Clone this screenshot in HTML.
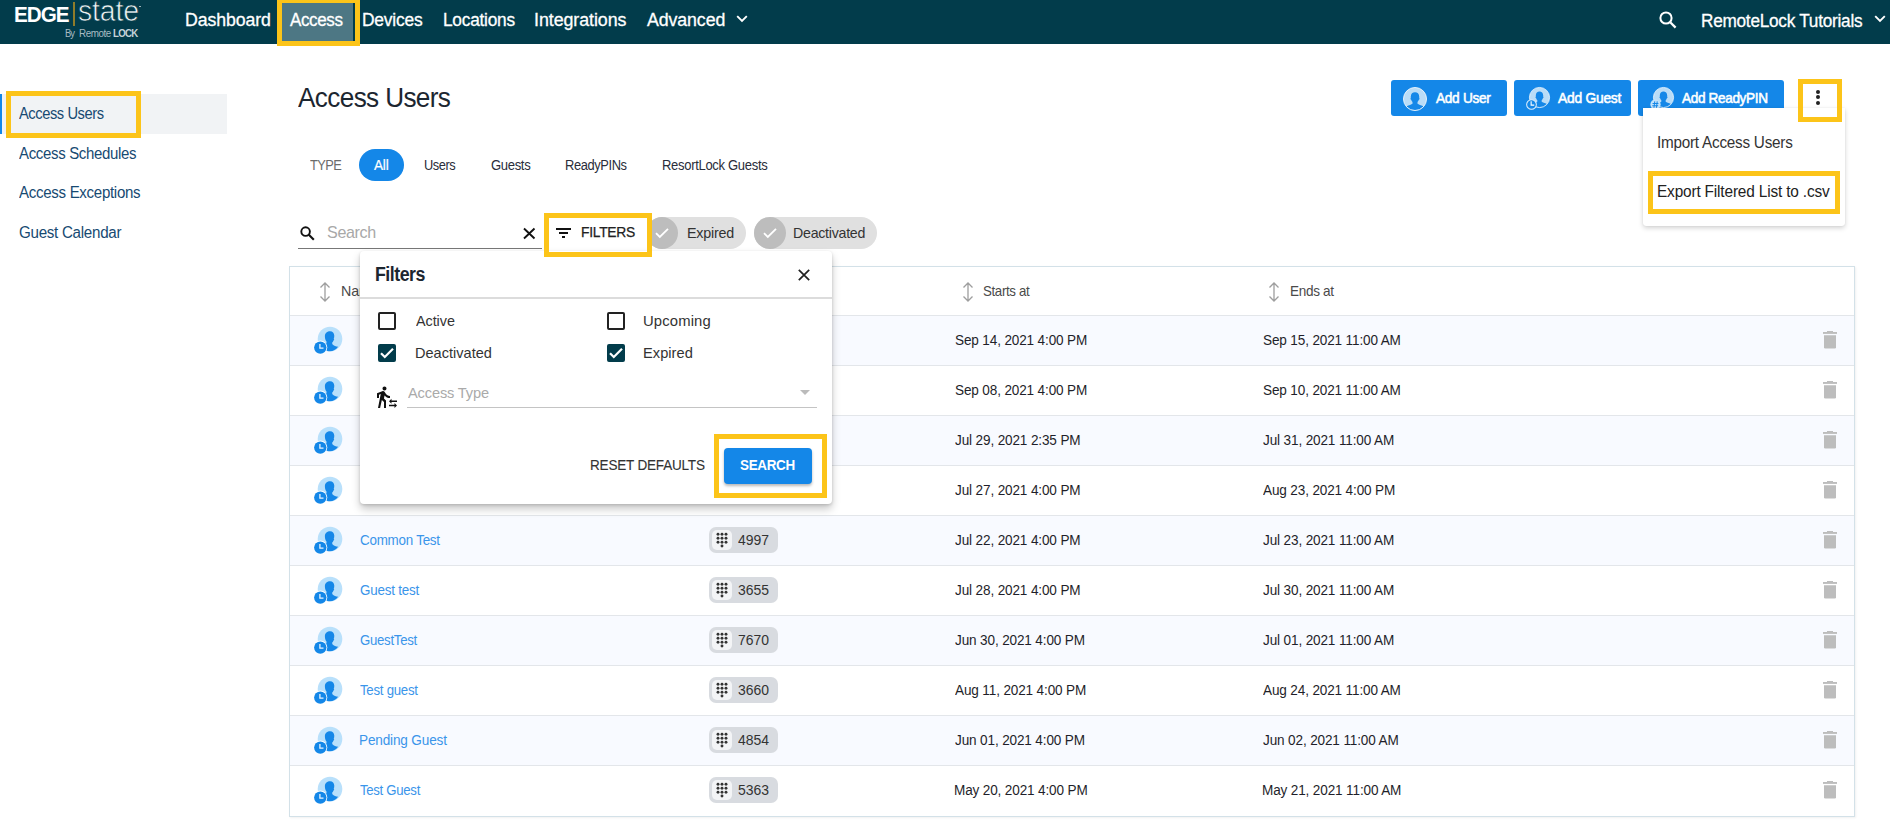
<!DOCTYPE html>
<html><head><meta charset="utf-8">
<style>
*{box-sizing:border-box;margin:0;padding:0}
html,body{width:1890px;height:829px;overflow:hidden;background:#fff;font-family:"Liberation Sans",sans-serif;position:relative}
.a{position:absolute;white-space:nowrap}
svg{position:absolute;overflow:visible}
.yb{position:absolute;border:5px solid #fcc419}
.row{position:absolute;left:289px;width:1566px;height:50px;border-top:1px solid #e3e6ea}
.row.o{background:#f8faff}
.cb{position:absolute;width:18px;height:18px;border:2px solid #222;border-radius:2px}
.cb.on{background:#023c4b;border-color:#023c4b}
</style></head><body>

<svg width="0" height="0" style="position:absolute">
<defs>
<g id="avg">
 <circle cx="14" cy="12" r="12.3" fill="#b9e0fb"/>
 <path d="M14 4.2c2.6 0 4.3 2 4.3 4.6 0 1.2-.2 2.2-.6 3.2l.6.5-.6.8c-.4 1-1 1.9-1.6 2.5l.3 1.4c1.4 1.3 3.6 2.2 5.7 2.6C20 22.6 17.2 24.3 14 24.3c-1.8 0-3.4-.5-4.8-1.4l1.4-8.2c-.8-.8-1.3-2-1.5-3.2-.2-.9-.2-1.8-.2-2.7C8.9 6.2 11.4 4.2 14 4.2z" fill="#1487e8"/>
 <circle cx="4.3" cy="20.6" r="7" fill="#fff"/>
 <circle cx="4.3" cy="20.6" r="6.2" fill="#1487e8"/>
 <path d="M3.9 17.1v4.1h3.6" stroke="#e8f3fd" stroke-width="1.3" fill="none"/>
</g>
<g id="dial" fill="#333">
 <circle cx="6" cy="4.3" r="1.45"/><circle cx="10" cy="4.3" r="1.45"/><circle cx="14" cy="4.3" r="1.45"/>
 <circle cx="6" cy="8.3" r="1.45"/><circle cx="10" cy="8.3" r="1.45"/><circle cx="14" cy="8.3" r="1.45"/>
 <circle cx="6" cy="12.3" r="1.45"/><circle cx="10" cy="12.3" r="1.45"/><circle cx="14" cy="12.3" r="1.45"/>
 <circle cx="10" cy="16" r="1.45"/>
</g>
<g id="trash" fill="#bdbdbd">
 <rect x="0" y="3" width="14" height="1.9"/><rect x="4" y="2" width="6" height="1.2"/>
 <path d="M1 6.2h12v12.1a1.3 1.3 0 0 1-1.300 1.300H2.300a1.300 1.300 0 0 1-1.300-1.300z"/>
</g>
<g id="sort" fill="none" stroke="#9e9e9e" stroke-width="1.3">
 <path d="M7 1v18M2.5 5.5L7 1l4.5 4.5M2.5 14.5L7 19l4.5-4.5"/>
</g>
<clipPath id="bclip"><circle cx="12" cy="12" r="11.6"/></clipPath>
<g id="bav">
 <circle cx="12" cy="12" r="11.5" fill="#b9dcf7"/>
 <path clip-path="url(#bclip)" d="M12 5.2C14.4 5.2 16.2 6.8 16.2 9.4V11.2C16.6 11.3 16.7 11.8 16.5 12.2L16 12.6C15.7 13.6 15.2 14.4 14.5 15V16.8C15.5 17.7 18.1 18.2 20.2 19.2V26H3.8V19.2C5.9 18.2 8.5 17.7 9.5 16.8V15C8.8 14.4 8.3 13.6 8 12.6L7.5 12.2C7.3 11.8 7.4 11.3 7.8 11.2V9.4C7.8 6.8 9.6 5.2 12 5.2Z" fill="#1487e8"/>
 <circle cx="12" cy="12" r="11.5" fill="none" stroke="#e3f1fc" stroke-width="1"/>
</g>
</defs></svg>
<div class="a" style="left:0;top:0;width:1890px;height:44px;background:#023c4b"></div>
<div class="a" style="left:14.48px;top:1px;font-size:22.5px;line-height:27px;color:#fff;font-weight:bold;letter-spacing:-1.088px;transform:scaleX(0.9177);transform-origin:0 0;">EDGE</div>
<div class="a" style="left:73px;top:2px;width:2.4px;height:23.5px;background:#8f7c2a"></div>
<div class="a" style="left:77.90px;top:-6px;font-size:29px;line-height:35px;color:#eef3f4;letter-spacing:-0.174px;transform:scaleX(0.9829);transform-origin:0 0;-webkit-text-stroke:0.7px #eef3f4;-webkit-text-stroke-color:#023c4b;">state</div>
<div class="a" style="left:138.5px;top:5.5px;width:2px;height:1.2px;background:#9fb3ba"></div>
<div class="a" style="left:64.90px;top:27px;font-size:11px;line-height:13px;color:#a9bcc4;letter-spacing:-1.175px;transform:scaleX(0.8551);transform-origin:0 0;">By</div>
<div class="a" style="left:79.10px;top:27px;font-size:11px;line-height:13px;color:#a9bcc4;letter-spacing:-0.496px;transform:scaleX(0.8965);transform-origin:0 0;">Remote</div>
<div class="a" style="left:112.80px;top:27px;font-size:11px;line-height:13px;color:#c6d3d9;font-weight:bold;letter-spacing:-0.776px;transform:scaleX(0.8791);transform-origin:0 0;">LOCK</div>
<div class="a" style="left:282px;top:3px;width:71px;height:38px;background:#4d7784"></div>
<div class="yb" style="left:277px;top:-2px;width:83px;height:48px"></div>
<div class="a" style="left:184.72px;top:9px;font-size:18px;line-height:22px;color:#fff;letter-spacing:-0.112px;transform:scaleX(0.9842);transform-origin:0 0;-webkit-text-stroke:0.3px #fff;">Dashboard</div>
<div class="a" style="left:290.00px;top:9px;font-size:18px;line-height:22px;color:#fff;letter-spacing:-0.409px;transform:scaleX(0.9451);transform-origin:0 0;-webkit-text-stroke:0.3px #fff;">Access</div>
<div class="a" style="left:362.23px;top:9px;font-size:18px;line-height:22px;color:#fff;letter-spacing:-0.221px;transform:scaleX(0.9677);transform-origin:0 0;-webkit-text-stroke:0.3px #fff;">Devices</div>
<div class="a" style="left:442.84px;top:9px;font-size:18px;line-height:22px;color:#fff;letter-spacing:-0.248px;transform:scaleX(0.9599);transform-origin:0 0;-webkit-text-stroke:0.3px #fff;">Locations</div>
<div class="a" style="left:534.41px;top:9px;font-size:18px;line-height:22px;color:#fff;letter-spacing:-0.057px;transform:scaleX(0.9899);transform-origin:0 0;-webkit-text-stroke:0.3px #fff;">Integrations</div>
<div class="a" style="left:647.40px;top:9px;font-size:18px;line-height:22px;color:#fff;letter-spacing:-0.100px;transform:scaleX(0.9866);transform-origin:0 0;-webkit-text-stroke:0.3px #fff;">Advanced</div>
<svg style="left:736px;top:15px" width="12" height="8" viewBox="0 0 12 8"><path d="M1.2 1.2l4.8 4.8 4.8-4.8" stroke="#fff" stroke-width="1.9" fill="none"/></svg>
<svg style="left:1659px;top:11px" width="18" height="18" viewBox="0 0 18 18"><circle cx="7" cy="7" r="5.6" stroke="#fff" stroke-width="2" fill="none"/><path d="M11.2 11.2l5.4 5.4" stroke="#fff" stroke-width="2.3"/></svg>
<div class="a" style="left:1701.04px;top:10px;font-size:18px;line-height:22px;color:#fff;letter-spacing:-0.263px;transform:scaleX(0.9555);transform-origin:0 0;-webkit-text-stroke:0.3px #fff;">RemoteLock Tutorials</div>
<svg style="left:1874px;top:15px" width="12" height="8" viewBox="0 0 12 8"><path d="M1.2 1.2l4.8 4.8 4.8-4.8" stroke="#fff" stroke-width="1.9" fill="none"/></svg>
<div class="a" style="left:0;top:94px;width:227px;height:40px;background:#f1f3f5"></div>
<div class="a" style="left:0;top:94px;width:2px;height:40px;background:#1487e8"></div>
<div class="yb" style="left:6px;top:91px;width:135px;height:47px"></div>
<div class="a" style="left:18.50px;top:104px;font-size:16px;line-height:19px;color:#174a72;letter-spacing:-0.462px;transform:scaleX(0.9178);transform-origin:0 0;">Access Users</div>
<div class="a" style="left:18.50px;top:144px;font-size:16px;line-height:19px;color:#174a72;letter-spacing:-0.353px;transform:scaleX(0.9367);transform-origin:0 0;">Access Schedules</div>
<div class="a" style="left:18.50px;top:183px;font-size:16px;line-height:19px;color:#174a72;letter-spacing:-0.317px;transform:scaleX(0.9411);transform-origin:0 0;">Access Exceptions</div>
<div class="a" style="left:18.50px;top:223px;font-size:16px;line-height:19px;color:#174a72;letter-spacing:-0.296px;transform:scaleX(0.9469);transform-origin:0 0;">Guest Calendar</div>
<div class="a" style="left:298.30px;top:81px;font-size:28px;line-height:34px;color:#1c2630;letter-spacing:-0.660px;transform:scaleX(0.9332);transform-origin:0 0;">Access Users</div>
<div class="a" style="left:1391px;top:80px;width:116px;height:36px;background:#1487e8;border-radius:3px"></div>
<svg style="left:1403px;top:87px" width="24" height="24" viewBox="0 0 24 24"><use href="#bav"/></svg>
<div class="a" style="left:1435.70px;top:90px;font-size:14.5px;line-height:17px;color:#fff;letter-spacing:-0.321px;transform:scaleX(0.9423);transform-origin:0 0;-webkit-text-stroke:0.55px #fff;">Add User</div>
<div class="a" style="left:1514px;top:80px;width:117px;height:36px;background:#1487e8;border-radius:3px"></div>
<svg style="left:1529px;top:87px" width="21" height="21" viewBox="0 0 24 24"><use href="#bav"/></svg>
<svg style="left:1526px;top:98.7px" width="11" height="11" viewBox="0 0 12 12"><circle cx="6" cy="6" r="5.3" fill="#1487e8" stroke="#e3f1fc" stroke-width="1.1"/><path d="M5.6 2.4v4.3h3.4" stroke="#fff" stroke-width="1.2" fill="none"/></svg>
<div class="a" style="left:1558.40px;top:90px;font-size:14.5px;line-height:17px;color:#fff;letter-spacing:-0.259px;transform:scaleX(0.9532);transform-origin:0 0;-webkit-text-stroke:0.55px #fff;">Add Guest</div>
<div class="a" style="left:1638px;top:80px;width:146px;height:36px;background:#1487e8;border-radius:3px"></div>
<svg style="left:1653px;top:87px" width="21" height="21" viewBox="0 0 24 24"><use href="#bav"/></svg>
<svg style="left:1650px;top:98.5px" width="11" height="11" viewBox="0 0 12 12"><circle cx="6" cy="6" r="5.6" fill="#c2e2fa"/><path d="M5.2 2.6l-.9 7M7.9 2.6l-.9 7M2.8 4.9h6.4M2.5 7.4h6.4" stroke="#1487e8" stroke-width="1.1" fill="none"/></svg>
<div class="a" style="left:1682.30px;top:90px;font-size:14.5px;line-height:17px;color:#fff;letter-spacing:-0.362px;transform:scaleX(0.9348);transform-origin:0 0;-webkit-text-stroke:0.55px #fff;">Add ReadyPIN</div>
<div class="a" style="left:1815.7px;top:89.5px;width:4px;height:4px;border-radius:2px;background:#222"></div>
<div class="a" style="left:1815.7px;top:95px;width:4px;height:4px;border-radius:2px;background:#222"></div>
<div class="a" style="left:1815.7px;top:100.5px;width:4px;height:4px;border-radius:2px;background:#222"></div>
<div class="a" style="left:1643px;top:108px;width:202px;height:118px;background:#fff;border-radius:0 0 3px 3px;box-shadow:0 2px 5px rgba(0,0,0,.18),0 0 1px rgba(0,0,0,.12)"></div>
<div class="a" style="left:1657.35px;top:133px;font-size:16px;line-height:19px;color:#333;letter-spacing:-0.242px;transform:scaleX(0.9541);transform-origin:0 0;">Import Access Users</div>
<div class="a" style="left:1657.34px;top:182px;font-size:16px;line-height:19px;color:#222;letter-spacing:-0.168px;transform:scaleX(0.9618);transform-origin:0 0;">Export Filtered List to .csv</div>
<div class="yb" style="left:1648px;top:171px;width:192px;height:43px"></div>
<div class="yb" style="left:1798px;top:79px;width:44px;height:43px"></div>
<div class="a" style="left:310.20px;top:157px;font-size:14px;line-height:17px;color:#6b6b6b;letter-spacing:-0.630px;transform:scaleX(0.9174);transform-origin:0 0;">TYPE</div>
<div class="a" style="left:359px;top:149px;width:45px;height:32px;border-radius:16px;background:#1487e8"></div>
<div class="a" style="left:374.40px;top:157px;font-size:14px;line-height:17px;color:#fff;letter-spacing:-0.170px;transform:scaleX(0.9663);transform-origin:0 0;-webkit-text-stroke:0.2px #fff;">All</div>
<div class="a" style="left:423.88px;top:157px;font-size:14px;line-height:17px;color:#2a2d3a;letter-spacing:-0.476px;transform:scaleX(0.9152);transform-origin:0 0;">Users</div>
<div class="a" style="left:491.10px;top:157px;font-size:14px;line-height:17px;color:#2a2d3a;letter-spacing:-0.372px;transform:scaleX(0.9343);transform-origin:0 0;">Guests</div>
<div class="a" style="left:565.28px;top:157px;font-size:14px;line-height:17px;color:#2a2d3a;letter-spacing:-0.435px;transform:scaleX(0.9212);transform-origin:0 0;">ReadyPINs</div>
<div class="a" style="left:661.57px;top:157px;font-size:14px;line-height:17px;color:#2a2d3a;letter-spacing:-0.331px;transform:scaleX(0.9295);transform-origin:0 0;">ResortLock Guests</div>
<svg style="left:300px;top:226px" width="15" height="14" viewBox="0 0 15 14"><circle cx="5.6" cy="5.6" r="4.3" stroke="#111" stroke-width="1.9" fill="none"/><path d="M8.8 8.8l5 5" stroke="#111" stroke-width="2.1"/></svg>
<div class="a" style="left:326.50px;top:223px;font-size:17px;line-height:20px;color:#a8a8a8;letter-spacing:-0.369px;transform:scaleX(0.9464);transform-origin:0 0;">Search</div>
<div class="a" style="left:298px;top:247.5px;width:244px;height:1.3px;background:#777"></div>
<svg style="left:522.5px;top:227.5px" width="12.5" height="11" viewBox="0 0 12.5 11"><path d="M1 .5l10.5 10M11.5 .5L1 10.5" stroke="#111" stroke-width="1.9"/></svg>
<div class="a" style="left:646px;top:217px;width:100px;height:32px;border-radius:16px;background:#e0e0e0"></div>
<div class="a" style="left:646px;top:217px;width:32px;height:32px;border-radius:16px;background:#bdbdbd"></div>
<svg style="left:654px;top:226px" width="16" height="14" viewBox="0 0 16 14"><path d="M2 7.2l3.8 3.8L14 2.8" stroke="#fff" stroke-width="1.8" fill="none"/></svg>
<div class="a" style="left:686.55px;top:224px;font-size:15px;line-height:18px;color:#333;letter-spacing:-0.241px;transform:scaleX(0.9549);transform-origin:0 0;">Expired</div>
<div class="a" style="left:754px;top:217px;width:123px;height:32px;border-radius:16px;background:#e0e0e0"></div>
<div class="a" style="left:754px;top:217px;width:32px;height:32px;border-radius:16px;background:#bdbdbd"></div>
<svg style="left:762px;top:226px" width="16" height="14" viewBox="0 0 16 14"><path d="M2 7.2l3.8 3.8L14 2.8" stroke="#fff" stroke-width="1.8" fill="none"/></svg>
<div class="a" style="left:792.65px;top:224px;font-size:15px;line-height:18px;color:#333;letter-spacing:-0.271px;transform:scaleX(0.9460);transform-origin:0 0;">Deactivated</div>
<div class="a" style="left:544px;top:213px;width:108px;height:44px;background:#fff"></div>
<svg style="left:556px;top:228px" width="15" height="10" viewBox="0 0 15 10"><path d="M0 1h15M3 5h9M6 9h3" stroke="#111" stroke-width="1.9"/></svg>
<div class="a" style="left:580.75px;top:224px;font-size:14.5px;line-height:17px;color:#222;letter-spacing:-0.278px;transform:scaleX(0.9546);transform-origin:0 0;-webkit-text-stroke:0.25px #222;">FILTERS</div>
<div class="a" style="left:289px;top:266px;width:1566px;height:551px;border:1px solid #d3e1e8;background:#fff;box-shadow:1px 1px 2px rgba(0,0,0,.06)"></div>
<svg style="left:318px;top:281.5px" width="14" height="20" viewBox="0 0 14 20"><use href="#sort"/></svg>
<div class="a" style="left:340.52px;top:283px;font-size:14.5px;line-height:17px;color:#4a4a4a;letter-spacing:-0.149px;transform:scaleX(0.9820);transform-origin:0 0;">Name</div>
<svg style="left:960.5px;top:281.5px" width="14" height="20" viewBox="0 0 14 20"><use href="#sort"/></svg>
<div class="a" style="left:983.30px;top:283px;font-size:14.5px;line-height:17px;color:#4a4a4a;letter-spacing:-0.363px;transform:scaleX(0.9146);transform-origin:0 0;">Starts at</div>
<svg style="left:1267px;top:281.5px" width="14" height="20" viewBox="0 0 14 20"><use href="#sort"/></svg>
<div class="a" style="left:1289.77px;top:283px;font-size:14.5px;line-height:17px;color:#4a4a4a;letter-spacing:-0.336px;transform:scaleX(0.9344);transform-origin:0 0;">Ends at</div>
<div class="row o" style="top:315px;left:290px;width:1564px"></div>
<svg style="left:316px;top:327px" width="32" height="32" viewBox="0 0 32 32"><use href="#avg"/></svg>
<div class="a" style="left:955.20px;top:332px;font-size:14px;line-height:17px;color:#1f1f2a;letter-spacing:-0.148px;transform:scaleX(0.9689);transform-origin:0 0;">Sep 14, 2021 4:00 PM</div>
<div class="a" style="left:1262.60px;top:332px;font-size:14px;line-height:17px;color:#1f1f2a;letter-spacing:-0.148px;transform:scaleX(0.9689);transform-origin:0 0;">Sep 15, 2021 11:00 AM</div>
<svg style="left:1823px;top:329px" width="14" height="20" viewBox="0 0 14 20"><use href="#trash"/></svg>
<div class="row" style="top:365px;left:290px;width:1564px"></div>
<svg style="left:316px;top:377px" width="32" height="32" viewBox="0 0 32 32"><use href="#avg"/></svg>
<div class="a" style="left:955.20px;top:382px;font-size:14px;line-height:17px;color:#1f1f2a;letter-spacing:-0.148px;transform:scaleX(0.9689);transform-origin:0 0;">Sep 08, 2021 4:00 PM</div>
<div class="a" style="left:1262.60px;top:382px;font-size:14px;line-height:17px;color:#1f1f2a;letter-spacing:-0.148px;transform:scaleX(0.9689);transform-origin:0 0;">Sep 10, 2021 11:00 AM</div>
<svg style="left:1823px;top:379px" width="14" height="20" viewBox="0 0 14 20"><use href="#trash"/></svg>
<div class="row o" style="top:415px;left:290px;width:1564px"></div>
<svg style="left:316px;top:427px" width="32" height="32" viewBox="0 0 32 32"><use href="#avg"/></svg>
<div class="a" style="left:955.20px;top:432px;font-size:14px;line-height:17px;color:#1f1f2a;letter-spacing:-0.141px;transform:scaleX(0.9689);transform-origin:0 0;">Jul 29, 2021 2:35 PM</div>
<div class="a" style="left:1262.60px;top:432px;font-size:14px;line-height:17px;color:#1f1f2a;letter-spacing:-0.140px;transform:scaleX(0.9689);transform-origin:0 0;">Jul 31, 2021 11:00 AM</div>
<svg style="left:1823px;top:429px" width="14" height="20" viewBox="0 0 14 20"><use href="#trash"/></svg>
<div class="row" style="top:465px;left:290px;width:1564px"></div>
<svg style="left:316px;top:477px" width="32" height="32" viewBox="0 0 32 32"><use href="#avg"/></svg>
<div class="a" style="left:955.20px;top:482px;font-size:14px;line-height:17px;color:#1f1f2a;letter-spacing:-0.141px;transform:scaleX(0.9689);transform-origin:0 0;">Jul 27, 2021 4:00 PM</div>
<div class="a" style="left:1262.60px;top:482px;font-size:14px;line-height:17px;color:#1f1f2a;letter-spacing:-0.148px;transform:scaleX(0.9689);transform-origin:0 0;">Aug 23, 2021 4:00 PM</div>
<svg style="left:1823px;top:479px" width="14" height="20" viewBox="0 0 14 20"><use href="#trash"/></svg>
<div class="row o" style="top:515px;left:290px;width:1564px"></div>
<svg style="left:316px;top:527px" width="32" height="32" viewBox="0 0 32 32"><use href="#avg"/></svg>
<div class="a" style="left:359.60px;top:532px;font-size:14px;line-height:17px;color:#3a95ea;letter-spacing:-0.243px;transform:scaleX(0.9567);transform-origin:0 0;">Common Test</div>
<div class="a" style="left:709px;top:527px;width:69px;height:26px;background:#d8dbe0;border-radius:7px"></div>
<div class="a" style="left:712px;top:530px;width:20px;height:20px;background:#f3f4f6;border-radius:5px"></div>
<svg style="left:712px;top:530px" width="20" height="20" viewBox="0 0 20 20"><use href="#dial"/></svg>
<div class="a" style="left:737.80px;top:532px;font-size:14px;line-height:17px;color:#333;letter-spacing:-0.021px;transform:scaleX(0.9970);transform-origin:0 0;">4997</div>
<div class="a" style="left:955.20px;top:532px;font-size:14px;line-height:17px;color:#1f1f2a;letter-spacing:-0.141px;transform:scaleX(0.9689);transform-origin:0 0;">Jul 22, 2021 4:00 PM</div>
<div class="a" style="left:1262.60px;top:532px;font-size:14px;line-height:17px;color:#1f1f2a;letter-spacing:-0.140px;transform:scaleX(0.9689);transform-origin:0 0;">Jul 23, 2021 11:00 AM</div>
<svg style="left:1823px;top:529px" width="14" height="20" viewBox="0 0 14 20"><use href="#trash"/></svg>
<div class="row" style="top:565px;left:290px;width:1564px"></div>
<svg style="left:316px;top:577px" width="32" height="32" viewBox="0 0 32 32"><use href="#avg"/></svg>
<div class="a" style="left:359.60px;top:582px;font-size:14px;line-height:17px;color:#3a95ea;letter-spacing:-0.201px;transform:scaleX(0.9564);transform-origin:0 0;">Guest test</div>
<div class="a" style="left:709px;top:577px;width:69px;height:26px;background:#d8dbe0;border-radius:7px"></div>
<div class="a" style="left:712px;top:580px;width:20px;height:20px;background:#f3f4f6;border-radius:5px"></div>
<svg style="left:712px;top:580px" width="20" height="20" viewBox="0 0 20 20"><use href="#dial"/></svg>
<div class="a" style="left:737.80px;top:582px;font-size:14px;line-height:17px;color:#333;letter-spacing:-0.021px;transform:scaleX(0.9970);transform-origin:0 0;">3655</div>
<div class="a" style="left:955.20px;top:582px;font-size:14px;line-height:17px;color:#1f1f2a;letter-spacing:-0.141px;transform:scaleX(0.9689);transform-origin:0 0;">Jul 28, 2021 4:00 PM</div>
<div class="a" style="left:1262.60px;top:582px;font-size:14px;line-height:17px;color:#1f1f2a;letter-spacing:-0.140px;transform:scaleX(0.9689);transform-origin:0 0;">Jul 30, 2021 11:00 AM</div>
<svg style="left:1823px;top:579px" width="14" height="20" viewBox="0 0 14 20"><use href="#trash"/></svg>
<div class="row o" style="top:615px;left:290px;width:1564px"></div>
<svg style="left:316px;top:627px" width="32" height="32" viewBox="0 0 32 32"><use href="#avg"/></svg>
<div class="a" style="left:359.60px;top:632px;font-size:14px;line-height:17px;color:#3a95ea;letter-spacing:-0.292px;transform:scaleX(0.9424);transform-origin:0 0;">GuestTest</div>
<div class="a" style="left:709px;top:627px;width:69px;height:26px;background:#d8dbe0;border-radius:7px"></div>
<div class="a" style="left:712px;top:630px;width:20px;height:20px;background:#f3f4f6;border-radius:5px"></div>
<svg style="left:712px;top:630px" width="20" height="20" viewBox="0 0 20 20"><use href="#dial"/></svg>
<div class="a" style="left:737.80px;top:632px;font-size:14px;line-height:17px;color:#333;letter-spacing:-0.021px;transform:scaleX(0.9970);transform-origin:0 0;">7670</div>
<div class="a" style="left:955.20px;top:632px;font-size:14px;line-height:17px;color:#1f1f2a;letter-spacing:-0.146px;transform:scaleX(0.9689);transform-origin:0 0;">Jun 30, 2021 4:00 PM</div>
<div class="a" style="left:1262.60px;top:632px;font-size:14px;line-height:17px;color:#1f1f2a;letter-spacing:-0.140px;transform:scaleX(0.9689);transform-origin:0 0;">Jul 01, 2021 11:00 AM</div>
<svg style="left:1823px;top:629px" width="14" height="20" viewBox="0 0 14 20"><use href="#trash"/></svg>
<div class="row" style="top:665px;left:290px;width:1564px"></div>
<svg style="left:316px;top:677px" width="32" height="32" viewBox="0 0 32 32"><use href="#avg"/></svg>
<div class="a" style="left:359.60px;top:682px;font-size:14px;line-height:17px;color:#3a95ea;letter-spacing:-0.259px;transform:scaleX(0.9433);transform-origin:0 0;">Test guest</div>
<div class="a" style="left:709px;top:677px;width:69px;height:26px;background:#d8dbe0;border-radius:7px"></div>
<div class="a" style="left:712px;top:680px;width:20px;height:20px;background:#f3f4f6;border-radius:5px"></div>
<svg style="left:712px;top:680px" width="20" height="20" viewBox="0 0 20 20"><use href="#dial"/></svg>
<div class="a" style="left:737.80px;top:682px;font-size:14px;line-height:17px;color:#333;letter-spacing:-0.021px;transform:scaleX(0.9970);transform-origin:0 0;">3660</div>
<div class="a" style="left:955.20px;top:682px;font-size:14px;line-height:17px;color:#1f1f2a;letter-spacing:-0.147px;transform:scaleX(0.9689);transform-origin:0 0;">Aug 11, 2021 4:00 PM</div>
<div class="a" style="left:1262.60px;top:682px;font-size:14px;line-height:17px;color:#1f1f2a;letter-spacing:-0.148px;transform:scaleX(0.9689);transform-origin:0 0;">Aug 24, 2021 11:00 AM</div>
<svg style="left:1823px;top:679px" width="14" height="20" viewBox="0 0 14 20"><use href="#trash"/></svg>
<div class="row o" style="top:715px;left:290px;width:1564px"></div>
<svg style="left:316px;top:727px" width="32" height="32" viewBox="0 0 32 32"><use href="#avg"/></svg>
<div class="a" style="left:358.63px;top:732px;font-size:14px;line-height:17px;color:#3a95ea;letter-spacing:-0.154px;transform:scaleX(0.9691);transform-origin:0 0;">Pending Guest</div>
<div class="a" style="left:709px;top:727px;width:69px;height:26px;background:#d8dbe0;border-radius:7px"></div>
<div class="a" style="left:712px;top:730px;width:20px;height:20px;background:#f3f4f6;border-radius:5px"></div>
<svg style="left:712px;top:730px" width="20" height="20" viewBox="0 0 20 20"><use href="#dial"/></svg>
<div class="a" style="left:737.80px;top:732px;font-size:14px;line-height:17px;color:#333;letter-spacing:-0.021px;transform:scaleX(0.9970);transform-origin:0 0;">4854</div>
<div class="a" style="left:955.20px;top:732px;font-size:14px;line-height:17px;color:#1f1f2a;letter-spacing:-0.146px;transform:scaleX(0.9689);transform-origin:0 0;">Jun 01, 2021 4:00 PM</div>
<div class="a" style="left:1262.60px;top:732px;font-size:14px;line-height:17px;color:#1f1f2a;letter-spacing:-0.145px;transform:scaleX(0.9689);transform-origin:0 0;">Jun 02, 2021 11:00 AM</div>
<svg style="left:1823px;top:729px" width="14" height="20" viewBox="0 0 14 20"><use href="#trash"/></svg>
<div class="row" style="top:765px;left:290px;width:1564px"></div>
<svg style="left:316px;top:777px" width="32" height="32" viewBox="0 0 32 32"><use href="#avg"/></svg>
<div class="a" style="left:359.60px;top:782px;font-size:14px;line-height:17px;color:#3a95ea;letter-spacing:-0.295px;transform:scaleX(0.9382);transform-origin:0 0;">Test Guest</div>
<div class="a" style="left:709px;top:777px;width:69px;height:26px;background:#d8dbe0;border-radius:7px"></div>
<div class="a" style="left:712px;top:780px;width:20px;height:20px;background:#f3f4f6;border-radius:5px"></div>
<svg style="left:712px;top:780px" width="20" height="20" viewBox="0 0 20 20"><use href="#dial"/></svg>
<div class="a" style="left:737.80px;top:782px;font-size:14px;line-height:17px;color:#333;letter-spacing:-0.021px;transform:scaleX(0.9970);transform-origin:0 0;">5363</div>
<div class="a" style="left:954.23px;top:782px;font-size:14px;line-height:17px;color:#1f1f2a;letter-spacing:-0.149px;transform:scaleX(0.9689);transform-origin:0 0;">May 20, 2021 4:00 PM</div>
<div class="a" style="left:1261.63px;top:782px;font-size:14px;line-height:17px;color:#1f1f2a;letter-spacing:-0.148px;transform:scaleX(0.9689);transform-origin:0 0;">May 21, 2021 11:00 AM</div>
<svg style="left:1823px;top:779px" width="14" height="20" viewBox="0 0 14 20"><use href="#trash"/></svg>
<div class="a" style="left:360px;top:251px;width:472px;height:253px;background:#fff;border-radius:4px;box-shadow:0 5px 8px rgba(0,0,0,.22),0 1px 3px rgba(0,0,0,.15)"></div>
<div class="a" style="left:374.69px;top:263px;font-size:19.5px;line-height:23px;color:#1c2630;font-weight:bold;letter-spacing:-0.538px;transform:scaleX(0.9110);transform-origin:0 0;">Filters</div>
<svg style="left:798px;top:268.5px" width="12" height="12" viewBox="0 0 12 12"><path d="M.8 .8l10.4 10.4M11.2 .8L.8 11.2" stroke="#222" stroke-width="1.7"/></svg>
<div class="a" style="left:360px;top:297px;width:472px;height:1.5px;background:#dcdcdc"></div>
<div class="cb" style="left:378px;top:312px"></div>
<div class="a" style="left:415.60px;top:313px;font-size:14.5px;line-height:17px;color:#333;letter-spacing:-0.050px;transform:scaleX(0.9905);transform-origin:0 0;">Active</div>
<div class="cb on" style="left:378px;top:344px"></div><svg style="left:380px;top:347px" width="14" height="12" viewBox="0 0 14 12"><path d="M1 6.2l3.8 3.8L13 1.8" stroke="#fff" stroke-width="2.2" fill="none"/></svg>
<div class="a" style="left:414.60px;top:345px;font-size:14.5px;line-height:17px;color:#333;letter-spacing:0.012px;transform:scaleX(1.0023);transform-origin:0 0;">Deactivated</div>
<div class="cb" style="left:607px;top:312px"></div>
<div class="a" style="left:643.18px;top:313px;font-size:14.5px;line-height:17px;color:#333;letter-spacing:0.136px;transform:scaleX(1.0220);transform-origin:0 0;">Upcoming</div>
<div class="cb on" style="left:607px;top:344px"></div><svg style="left:609px;top:347px" width="14" height="12" viewBox="0 0 14 12"><path d="M1 6.2l3.8 3.8L13 1.8" stroke="#fff" stroke-width="2.2" fill="none"/></svg>
<div class="a" style="left:643.19px;top:345px;font-size:14.5px;line-height:17px;color:#333;letter-spacing:0.040px;transform:scaleX(1.0074);transform-origin:0 0;">Expired</div>
<svg style="left:375px;top:384.5px" width="24" height="24" viewBox="0 0 24 24"><path fill="#111" d="M16.49 15.5v-1.75L14 16.25l2.49 2.5V17H22v-1.5h-5.51zm3.02 4.25H14v1.5h5.51V23L22 20.5 19.51 18v1.75zM9.5 5.5c1.1 0 2-.9 2-2s-.9-2-2-2-2 .9-2 2 .9 2 2 2zM5.750 8.900L3 23h2.1l1.75-8L9 17v6h2v-7.550L8.950 13.400l.6-3C10.850 12 12.800 13 15 13v-2c-1.850 0-3.450-1-4.350-2.450l-.95-1.600C9.350 6.350 8.700 6 8 6c-.25 0-.5.05-.75.15L2 8.300V13h2V9.650l1.750-.75"/></svg>
<div class="a" style="left:407.50px;top:384px;font-size:15px;line-height:18px;color:#aaa;letter-spacing:-0.148px;transform:scaleX(0.9734);transform-origin:0 0;">Access Type</div>
<div class="a" style="left:407px;top:407px;width:410px;height:1px;background:#c4c4c4"></div>
<svg style="left:800px;top:390px" width="10" height="5" viewBox="0 0 10 5"><path d="M0 0h10L5 5z" fill="#bbb"/></svg>
<div class="a" style="left:590.33px;top:457px;font-size:14px;line-height:17px;color:#333;letter-spacing:-0.204px;transform:scaleX(0.9662);transform-origin:0 0;-webkit-text-stroke:0.12px #333;">RESET DEFAULTS</div>
<div class="a" style="left:724px;top:448px;width:88px;height:36px;background:#1487e8;border-radius:4px;box-shadow:0 2px 3px rgba(0,0,0,.28)"></div>
<div class="a" style="left:739.90px;top:457px;font-size:14px;line-height:17px;color:#fff;font-weight:bold;letter-spacing:-0.313px;transform:scaleX(0.9592);transform-origin:0 0;">SEARCH</div>
<div class="yb" style="left:714px;top:434px;width:113px;height:64px"></div>
<div class="yb" style="left:544px;top:213px;width:108px;height:44px"></div>
</body></html>
